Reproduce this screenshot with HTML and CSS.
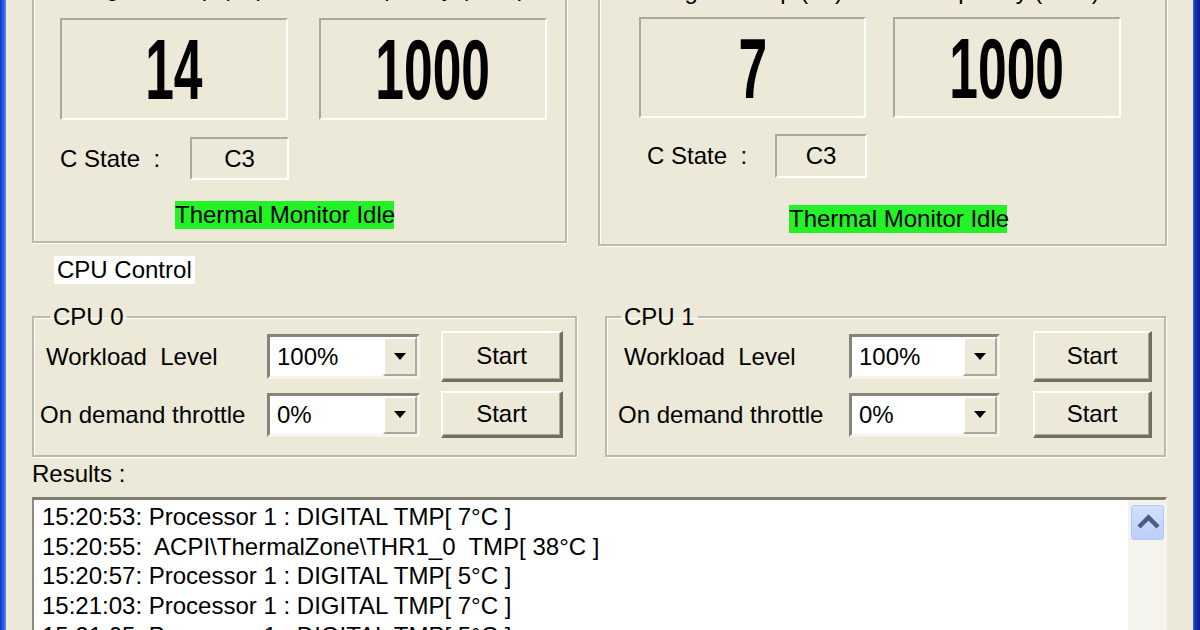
FILE: index.html
```html
<!DOCTYPE html>
<html lang="en">
<head>
    <meta charset="UTF-8">
    <meta name="viewport" content="width=device-width, initial-scale=1.0">
    <title>Thermal Monitor</title>
    <link rel="stylesheet" href="styles.css">
</head>
<body>
    <div class="window">
        <div class="frame-left"></div>

        <div class="dialog">
            <!-- Per processor readings -->
            <div class="monitor">
                <section class="group group-left">
                    <div class="readings">
                        <div class="reading">
                            <div class="reading-label">Digital Temp (°C)</div>
                            <div class="value-box"><span class="big">14</span></div>
                        </div>
                        <div class="reading">
                            <div class="reading-label">Frequency (MHz)</div>
                            <div class="value-box"><span class="big">1000</span></div>
                        </div>
                    </div>
                    <div class="cstate">
                        <span class="cstate-label">C State&nbsp; :</span>
                        <div class="state-box">C3</div>
                    </div>
                    <div class="thermal">Thermal Monitor Idle</div>
                </section>

                <section class="group group-right">
                    <div class="readings">
                        <div class="reading">
                            <div class="reading-label">Digital Temp (°C)</div>
                            <div class="value-box"><span class="big">7</span></div>
                        </div>
                        <div class="reading">
                            <div class="reading-label">Frequency (MHz)</div>
                            <div class="value-box"><span class="big">1000</span></div>
                        </div>
                    </div>
                    <div class="cstate">
                        <span class="cstate-label">C State&nbsp; :</span>
                        <div class="state-box">C3</div>
                    </div>
                    <div class="thermal">Thermal Monitor Idle</div>
                </section>
            </div>

            <div class="section-title">CPU Control</div>

            <!-- Workload controls -->
            <div class="controls">
                <fieldset class="cpu cpu-0">
                    <legend>CPU 0</legend>
                    <div class="ctl-row">
                        <span class="ctl-label indent">Workload&nbsp; Level</span>
                        <div class="combo"><span class="combo-value">100%</span><span class="combo-btn"><i class="arrow"></i></span></div>
                        <button class="btn">Start</button>
                    </div>
                    <div class="ctl-row">
                        <span class="ctl-label">On demand throttle</span>
                        <div class="combo"><span class="combo-value">0%</span><span class="combo-btn"><i class="arrow"></i></span></div>
                        <button class="btn">Start</button>
                    </div>
                </fieldset>

                <fieldset class="cpu cpu-1">
                    <legend>CPU 1</legend>
                    <div class="ctl-row">
                        <span class="ctl-label indent">Workload&nbsp; Level</span>
                        <div class="combo"><span class="combo-value">100%</span><span class="combo-btn"><i class="arrow"></i></span></div>
                        <button class="btn">Start</button>
                    </div>
                    <div class="ctl-row">
                        <span class="ctl-label">On demand throttle</span>
                        <div class="combo"><span class="combo-value">0%</span><span class="combo-btn"><i class="arrow"></i></span></div>
                        <button class="btn">Start</button>
                    </div>
                </fieldset>
            </div>

            <div class="results-label">Results :</div>

            <!-- Log list -->
            <div class="results">
                <div class="log">15:20:53: Processor 1 : DIGITAL TMP[ 7°C ]
15:20:55:  ACPI\ThermalZone\THR1_0  TMP[ 38°C ]
15:20:57: Processor 1 : DIGITAL TMP[ 5°C ]
15:21:03: Processor 1 : DIGITAL TMP[ 7°C ]
15:21:05: Processor 1 : DIGITAL TMP[ 5°C ]</div>
                <div class="scrollbar">
                    <div class="scroll-up">
                        <svg viewBox="0 0 33 35" width="33" height="35">
                            <polyline points="7,21 16.5,11.5 26,21" fill="none" stroke="#4a5d84" stroke-width="4.5"/>
                        </svg>
                    </div>
                </div>
            </div>
        </div>

        <div class="frame-right"></div>
    </div>
</body>
</html>
```

FILE: styles.css
```css
* {
    margin: 0;
    padding: 0;
    box-sizing: border-box;
}

body {
    height: 630px;
    overflow: hidden;
    background: #ece9d8;
    font-family: "Liberation Sans", Arial, sans-serif;
    font-size: 24px;
    color: #000;
}

/* Window frame */
.window {
    display: flex;
    height: 630px;
}

.frame-left {
    width: 6px;
    background: linear-gradient(90deg, #0b3ccc 0%, #2b62e4 60%, #6590ee 100%);
}

.frame-right {
    width: 7px;
    background: linear-gradient(90deg, #3a6ad8 0%, #0f2fae 35%, #0a1f8e 100%);
}

.dialog {
    flex: 1;
    background: #ece9d8;
    padding-left: 26px;
    overflow: hidden;
}

/* Top readings */
.monitor {
    display: grid;
    grid-template-columns: 535px 569px;
    column-gap: 31px;
    align-items: start;
    margin-top: -42px;
}

.group {
    border: 2px solid #bcb9a8;
    box-shadow: inset 1px 1px 0 #fff, 1px 1px 0 #fff;
}

.group-left { padding: 14px 0 12px 26px; }
.group-right { padding: 17px 0 11px 39px; }

.readings {
    display: flex;
    gap: 31px;
}

.group-right .readings { gap: 27px; }

.reading { width: 228px; }
.group-right .reading:first-child { width: 227px; }

.reading-label {
    height: 28px;
    line-height: 28px;
    margin-bottom: 16px;
    text-align: center;
    white-space: nowrap;
}

.group-right .reading-label { margin-bottom: 12px; }

.value-box {
    height: 102px;
    display: flex;
    align-items: center;
    justify-content: center;
    border: 2px solid;
    border-color: #aca899 #fff #fff #aca899;
}

.group-right .value-box { height: 101px; }

.big {
    display: inline-block;
    font-size: 86px;
    font-weight: bold;
    line-height: 1;
    transform: scaleX(0.6);
}

.cstate {
    display: flex;
    align-items: center;
    height: 43px;
    margin-top: 17px;
}

.group-right .cstate {
    height: 44px;
    margin: 16px 0 0 8px;
}

.cstate-label { width: 130px; }
.group-right .cstate-label { width: 128px; }

.state-box {
    width: 99px;
    height: 100%;
    display: flex;
    align-items: center;
    justify-content: center;
    border: 2px solid;
    border-color: #aca899 #fff #fff #aca899;
}

.group-right .state-box { width: 92px; }

.thermal {
    width: 219px;
    height: 28px;
    line-height: 28px;
    margin: 21px 0 0 115px;
    background: #22f226;
    text-align: center;
    white-space: nowrap;
}

.group-right .thermal {
    width: 218px;
    margin: 27px 0 0 150px;
}

.section-title {
    width: fit-content;
    margin: 10px 0 0 22px;
    padding: 0 3px;
    line-height: 28px;
    background: #fff;
}

/* CPU control groups */
.controls {
    display: grid;
    grid-template-columns: 545px 561px;
    column-gap: 28px;
    margin-top: 19px;
}

.cpu {
    border: 2px solid #bcb9a8;
    box-shadow: inset 1px 1px 0 #fff, 1px 1px 0 #fff;
    padding: 0 13px 17px 6px;
    min-width: 0;
    display: grid;
    row-gap: 9px;
}

.cpu-1 { padding: 0 12px 17px 11px; }

.cpu legend {
    margin-left: 10px;
    padding: 0 3px;
    line-height: 28px;
}

.cpu-1 legend { margin-left: 3px; }

.ctl-row {
    display: grid;
    grid-template-columns: 206px 153px 122px;
    column-gap: 21px;
    align-items: center;
    height: 47px;
}

.ctl-row:first-of-type { height: 51px; }

.cpu-1 .ctl-row {
    grid-template-columns: 198px 151px 119px;
    column-gap: 33px;
}

.ctl-label {
    white-space: nowrap;
}

.ctl-label.indent { padding-left: 6px; }

.combo {
    display: flex;
    height: 45px;
    background: #fff;
    border: 3px solid;
    border-color: #86847a #f4f3ee #f4f3ee #86847a;
}

.ctl-row + .ctl-row .combo { height: 44px; }

.combo-value {
    flex: 1;
    padding-left: 7px;
    display: flex;
    align-items: center;
}

.combo-btn {
    width: 34px;
    display: flex;
    align-items: center;
    justify-content: center;
    background: #ece9d8;
    border: 2px solid;
    border-color: #fff #aca899 #aca899 #fff;
}

.arrow {
    width: 0;
    height: 0;
    border-left: 6px solid transparent;
    border-right: 6px solid transparent;
    border-top: 7px solid #000;
}

.btn {
    align-self: stretch;
    font: inherit;
    color: #000;
    background: #ece9d8;
    border-style: solid;
    border-width: 2px 3px 3px 2px;
    border-color: #fff #716f64 #716f64 #fff;
    box-shadow: inset -1px -1px 0 #aca899;
}

/* Results list */
.results-label {
    margin-top: 3px;
    line-height: 28px;
}

.results {
    display: flex;
    width: 1135px;
    height: 200px;
    margin-top: 9px;
    background: #fff;
    border-style: solid;
    border-width: 3px 2px 2px 2px;
    border-color: #7f7d72 #f4f3ee #f4f3ee #8d8b80;
}

.log {
    flex: 1;
    padding: 2px 0 0 8px;
    line-height: 29.7px;
    white-space: pre;
}

.scrollbar {
    width: 37px;
    padding: 5px 0 0 3px;
    background: #f4f3ee;
}

.scroll-up {
    width: 33px;
    height: 35px;
    background: linear-gradient(180deg, #d3e0fd 0%, #bccffa 100%);
    border: 1px solid #b4c7f2;
    border-radius: 3px;
}

.scroll-up svg { display: block; }
```
